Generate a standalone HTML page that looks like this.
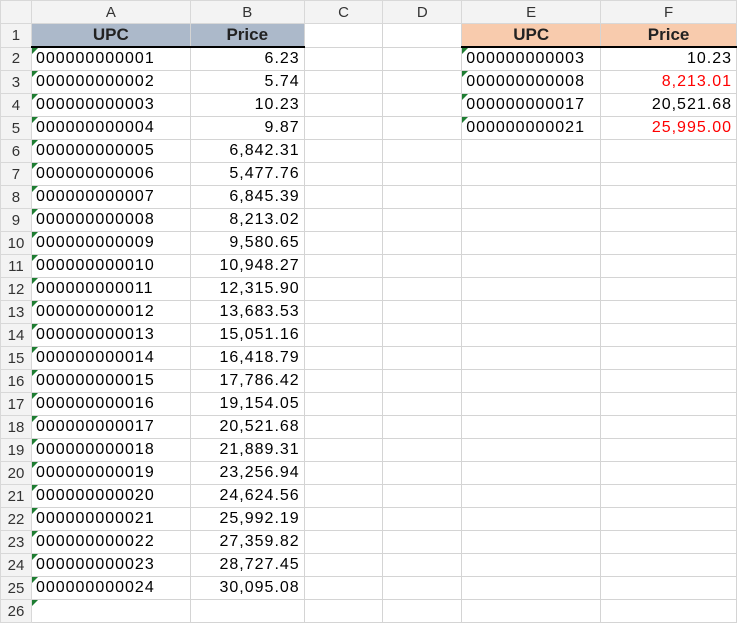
<!DOCTYPE html><html><head><style>
body{margin:0;background:#fff;width:737px;height:602px;overflow:hidden;font-family:"Liberation Sans",sans-serif}
table{border-collapse:collapse;table-layout:fixed;position:absolute;left:0;top:0}
td{height:22px;padding:0 4px;border:1px solid #d4d4d4;font-size:16px;letter-spacing:1px;white-space:nowrap;overflow:hidden;position:relative;color:#000}
tr.h td{background:#f3f3f3;text-align:center;color:#333;font-size:15px;letter-spacing:0;border-color:#d8d8d8}
td.r{background:#f3f3f3;text-align:center;color:#333;font-size:15px;letter-spacing:0;padding:0;border-color:#d8d8d8}
td.n{text-align:right}
td.t::before{content:"";position:absolute;left:0;top:0;border-top:6px solid #1e7d32;border-right:6px solid transparent}
td.g{background:#acb9ca;font-weight:bold;text-align:center;color:#222;letter-spacing:0;font-size:17px;border-bottom:2px solid #000}
td.o{background:#f8cbad;font-weight:bold;text-align:center;color:#222;letter-spacing:0;font-size:17px;border-bottom:2px solid #000}
.red{color:#f00}
</style></head><body>
<table>
<colgroup><col style="width:31px"><col style="width:159px"><col style="width:114px"><col style="width:79px"><col style="width:79px"><col style="width:139px"><col style="width:136px"></colgroup>
<tr class="h"><td></td><td>A</td><td>B</td><td>C</td><td>D</td><td>E</td><td>F</td></tr>
<tr><td class="r">1</td><td class="g">UPC</td><td class="g">Price</td><td></td><td></td><td class="o">UPC</td><td class="o">Price</td></tr>
<tr><td class="r">2</td><td class="t">000000000001</td><td class="n">6.23</td><td></td><td></td><td class="t">000000000003</td><td class="n">10.23</td></tr>
<tr><td class="r">3</td><td class="t">000000000002</td><td class="n">5.74</td><td></td><td></td><td class="t">000000000008</td><td class="n red">8,213.01</td></tr>
<tr><td class="r">4</td><td class="t">000000000003</td><td class="n">10.23</td><td></td><td></td><td class="t">000000000017</td><td class="n">20,521.68</td></tr>
<tr><td class="r">5</td><td class="t">000000000004</td><td class="n">9.87</td><td></td><td></td><td class="t">000000000021</td><td class="n red">25,995.00</td></tr>
<tr><td class="r">6</td><td class="t">000000000005</td><td class="n">6,842.31</td><td></td><td></td><td></td><td></td></tr>
<tr><td class="r">7</td><td class="t">000000000006</td><td class="n">5,477.76</td><td></td><td></td><td></td><td></td></tr>
<tr><td class="r">8</td><td class="t">000000000007</td><td class="n">6,845.39</td><td></td><td></td><td></td><td></td></tr>
<tr><td class="r">9</td><td class="t">000000000008</td><td class="n">8,213.02</td><td></td><td></td><td></td><td></td></tr>
<tr><td class="r">10</td><td class="t">000000000009</td><td class="n">9,580.65</td><td></td><td></td><td></td><td></td></tr>
<tr><td class="r">11</td><td class="t">000000000010</td><td class="n">10,948.27</td><td></td><td></td><td></td><td></td></tr>
<tr><td class="r">12</td><td class="t">000000000011</td><td class="n">12,315.90</td><td></td><td></td><td></td><td></td></tr>
<tr><td class="r">13</td><td class="t">000000000012</td><td class="n">13,683.53</td><td></td><td></td><td></td><td></td></tr>
<tr><td class="r">14</td><td class="t">000000000013</td><td class="n">15,051.16</td><td></td><td></td><td></td><td></td></tr>
<tr><td class="r">15</td><td class="t">000000000014</td><td class="n">16,418.79</td><td></td><td></td><td></td><td></td></tr>
<tr><td class="r">16</td><td class="t">000000000015</td><td class="n">17,786.42</td><td></td><td></td><td></td><td></td></tr>
<tr><td class="r">17</td><td class="t">000000000016</td><td class="n">19,154.05</td><td></td><td></td><td></td><td></td></tr>
<tr><td class="r">18</td><td class="t">000000000017</td><td class="n">20,521.68</td><td></td><td></td><td></td><td></td></tr>
<tr><td class="r">19</td><td class="t">000000000018</td><td class="n">21,889.31</td><td></td><td></td><td></td><td></td></tr>
<tr><td class="r">20</td><td class="t">000000000019</td><td class="n">23,256.94</td><td></td><td></td><td></td><td></td></tr>
<tr><td class="r">21</td><td class="t">000000000020</td><td class="n">24,624.56</td><td></td><td></td><td></td><td></td></tr>
<tr><td class="r">22</td><td class="t">000000000021</td><td class="n">25,992.19</td><td></td><td></td><td></td><td></td></tr>
<tr><td class="r">23</td><td class="t">000000000022</td><td class="n">27,359.82</td><td></td><td></td><td></td><td></td></tr>
<tr><td class="r">24</td><td class="t">000000000023</td><td class="n">28,727.45</td><td></td><td></td><td></td><td></td></tr>
<tr><td class="r">25</td><td class="t">000000000024</td><td class="n">30,095.08</td><td></td><td></td><td></td><td></td></tr>
<tr><td class="r">26</td><td class="t"></td><td></td><td></td><td></td><td></td><td></td></tr>
</table>
</body></html>
